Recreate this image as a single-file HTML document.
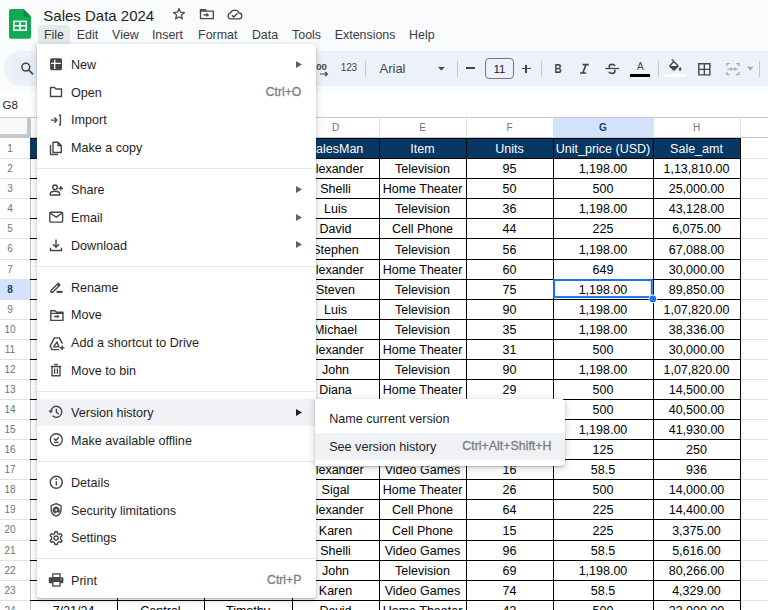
<!DOCTYPE html>
<html><head><meta charset="utf-8"><title>Sales Data 2024</title>
<style>
*{margin:0;padding:0;box-sizing:border-box}
html,body{width:768px;height:610px;overflow:hidden;background:#f9fbfd;font-family:"Liberation Sans", sans-serif}
.t{position:absolute;white-space:nowrap}
.a{position:absolute}
svg{position:absolute;overflow:visible}
</style></head>
<body>
<div class="a" style="left:0;top:92px;width:768px;height:518px;background:#fff"></div><div class="a" style="left:0;top:117px;width:768px;height:1px;background:#c7c7c7"></div><div class="a" style="left:30px;top:137px;width:738px;height:1px;background:#c7c7c7"></div><div class="a" style="left:553px;top:118px;width:100px;height:19px;background:#d3e3fd"></div><div class="a" style="left:30px;top:118px;width:1px;height:492px;background:#c7c7c7"></div><div class="a" style="left:0;top:118px;width:30px;height:20px;background:#f8f9fa;border-right:3px solid #c7c7c7;border-bottom:4px solid #c7c7c7"></div><div class="a" style="left:117px;top:118px;width:1px;height:20px;background:#e1e1e1"></div><div class="t" style="left:-126.5px;width:400px;text-align:center;top:120.53px;font-size:10px;line-height:14px;color:#6f7377;font-weight:normal;">A</div>
<div class="a" style="left:204px;top:118px;width:1px;height:20px;background:#e1e1e1"></div><div class="t" style="left:-39.5px;width:400px;text-align:center;top:120.53px;font-size:10px;line-height:14px;color:#6f7377;font-weight:normal;">B</div>
<div class="a" style="left:292px;top:118px;width:1px;height:20px;background:#e1e1e1"></div><div class="t" style="left:48.0px;width:400px;text-align:center;top:120.53px;font-size:10px;line-height:14px;color:#6f7377;font-weight:normal;">C</div>
<div class="a" style="left:379px;top:118px;width:1px;height:20px;background:#e1e1e1"></div><div class="t" style="left:135.5px;width:400px;text-align:center;top:120.53px;font-size:10px;line-height:14px;color:#6f7377;font-weight:normal;">D</div>
<div class="a" style="left:466px;top:118px;width:1px;height:20px;background:#e1e1e1"></div><div class="t" style="left:222.5px;width:400px;text-align:center;top:120.53px;font-size:10px;line-height:14px;color:#6f7377;font-weight:normal;">E</div>
<div class="a" style="left:553px;top:118px;width:1px;height:20px;background:#e1e1e1"></div><div class="t" style="left:309.5px;width:400px;text-align:center;top:120.53px;font-size:10px;line-height:14px;color:#6f7377;font-weight:normal;">F</div>
<div class="a" style="left:653px;top:118px;width:1px;height:20px;background:#e1e1e1"></div><div class="t" style="left:403.0px;width:400px;text-align:center;top:120.53px;font-size:10px;line-height:14px;color:#1c3a6b;font-weight:bold;">G</div>
<div class="a" style="left:740px;top:118px;width:1px;height:20px;background:#e1e1e1"></div><div class="t" style="left:496.5px;width:400px;text-align:center;top:120.53px;font-size:10px;line-height:14px;color:#6f7377;font-weight:normal;">H</div>
<div class="a" style="left:840px;top:118px;width:1px;height:20px;background:#e1e1e1"></div><div class="t" style="left:590.0px;width:400px;text-align:center;top:120.53px;font-size:10px;line-height:14px;color:#6f7377;font-weight:normal;">I</div>
<div class="a" style="left:0;top:158px;width:768px;height:1px;background:#e1e1e1"></div><div class="a" style="left:0;top:178px;width:768px;height:1px;background:#e1e1e1"></div><div class="a" style="left:0;top:198px;width:768px;height:1px;background:#e1e1e1"></div><div class="a" style="left:0;top:218px;width:768px;height:1px;background:#e1e1e1"></div><div class="a" style="left:0;top:238px;width:768px;height:1px;background:#e1e1e1"></div><div class="a" style="left:0;top:259px;width:768px;height:1px;background:#e1e1e1"></div><div class="a" style="left:0;top:279px;width:768px;height:1px;background:#e1e1e1"></div><div class="a" style="left:0;top:299px;width:768px;height:1px;background:#e1e1e1"></div><div class="a" style="left:0;top:319px;width:768px;height:1px;background:#e1e1e1"></div><div class="a" style="left:0;top:339px;width:768px;height:1px;background:#e1e1e1"></div><div class="a" style="left:0;top:359px;width:768px;height:1px;background:#e1e1e1"></div><div class="a" style="left:0;top:379px;width:768px;height:1px;background:#e1e1e1"></div><div class="a" style="left:0;top:399px;width:768px;height:1px;background:#e1e1e1"></div><div class="a" style="left:0;top:419px;width:768px;height:1px;background:#e1e1e1"></div><div class="a" style="left:0;top:439px;width:768px;height:1px;background:#e1e1e1"></div><div class="a" style="left:0;top:459px;width:768px;height:1px;background:#e1e1e1"></div><div class="a" style="left:0;top:479px;width:768px;height:1px;background:#e1e1e1"></div><div class="a" style="left:0;top:499px;width:768px;height:1px;background:#e1e1e1"></div><div class="a" style="left:0;top:519px;width:768px;height:1px;background:#e1e1e1"></div><div class="a" style="left:0;top:540px;width:768px;height:1px;background:#e1e1e1"></div><div class="a" style="left:0;top:560px;width:768px;height:1px;background:#e1e1e1"></div><div class="a" style="left:0;top:580px;width:768px;height:1px;background:#e1e1e1"></div><div class="a" style="left:0;top:600px;width:768px;height:1px;background:#e1e1e1"></div><div class="a" style="left:0;top:620px;width:768px;height:1px;background:#e1e1e1"></div><div class="a" style="left:0;top:640px;width:768px;height:1px;background:#e1e1e1"></div><div class="a" style="left:117px;top:138px;width:1px;height:472px;background:#e1e1e1"></div><div class="a" style="left:204px;top:138px;width:1px;height:472px;background:#e1e1e1"></div><div class="a" style="left:292px;top:138px;width:1px;height:472px;background:#e1e1e1"></div><div class="a" style="left:379px;top:138px;width:1px;height:472px;background:#e1e1e1"></div><div class="a" style="left:466px;top:138px;width:1px;height:472px;background:#e1e1e1"></div><div class="a" style="left:553px;top:138px;width:1px;height:472px;background:#e1e1e1"></div><div class="a" style="left:653px;top:138px;width:1px;height:472px;background:#e1e1e1"></div><div class="a" style="left:740px;top:138px;width:1px;height:472px;background:#e1e1e1"></div><div class="a" style="left:840px;top:138px;width:1px;height:472px;background:#e1e1e1"></div><div class="a" style="left:0;top:280px;width:30px;height:19px;background:#d3e3fd"></div><div class="t" style="left:-190px;width:400px;text-align:center;top:141.73px;font-size:10px;line-height:14px;color:#6f7377;font-weight:normal;">1</div>
<div class="t" style="left:-190px;width:400px;text-align:center;top:161.73px;font-size:10px;line-height:14px;color:#6f7377;font-weight:normal;">2</div>
<div class="t" style="left:-190px;width:400px;text-align:center;top:181.73px;font-size:10px;line-height:14px;color:#6f7377;font-weight:normal;">3</div>
<div class="t" style="left:-190px;width:400px;text-align:center;top:201.73px;font-size:10px;line-height:14px;color:#6f7377;font-weight:normal;">4</div>
<div class="t" style="left:-190px;width:400px;text-align:center;top:221.73px;font-size:10px;line-height:14px;color:#6f7377;font-weight:normal;">5</div>
<div class="t" style="left:-190px;width:400px;text-align:center;top:241.73px;font-size:10px;line-height:14px;color:#6f7377;font-weight:normal;">6</div>
<div class="t" style="left:-190px;width:400px;text-align:center;top:262.74px;font-size:10px;line-height:14px;color:#6f7377;font-weight:normal;">7</div>
<div class="t" style="left:-190px;width:400px;text-align:center;top:282.74px;font-size:10px;line-height:14px;color:#1c3a6b;font-weight:bold;">8</div>
<div class="t" style="left:-190px;width:400px;text-align:center;top:302.74px;font-size:10px;line-height:14px;color:#6f7377;font-weight:normal;">9</div>
<div class="t" style="left:-190px;width:400px;text-align:center;top:322.74px;font-size:10px;line-height:14px;color:#6f7377;font-weight:normal;">10</div>
<div class="t" style="left:-190px;width:400px;text-align:center;top:342.74px;font-size:10px;line-height:14px;color:#6f7377;font-weight:normal;">11</div>
<div class="t" style="left:-190px;width:400px;text-align:center;top:362.74px;font-size:10px;line-height:14px;color:#6f7377;font-weight:normal;">12</div>
<div class="t" style="left:-190px;width:400px;text-align:center;top:382.74px;font-size:10px;line-height:14px;color:#6f7377;font-weight:normal;">13</div>
<div class="t" style="left:-190px;width:400px;text-align:center;top:402.74px;font-size:10px;line-height:14px;color:#6f7377;font-weight:normal;">14</div>
<div class="t" style="left:-190px;width:400px;text-align:center;top:422.74px;font-size:10px;line-height:14px;color:#6f7377;font-weight:normal;">15</div>
<div class="t" style="left:-190px;width:400px;text-align:center;top:442.74px;font-size:10px;line-height:14px;color:#6f7377;font-weight:normal;">16</div>
<div class="t" style="left:-190px;width:400px;text-align:center;top:462.74px;font-size:10px;line-height:14px;color:#6f7377;font-weight:normal;">17</div>
<div class="t" style="left:-190px;width:400px;text-align:center;top:482.74px;font-size:10px;line-height:14px;color:#6f7377;font-weight:normal;">18</div>
<div class="t" style="left:-190px;width:400px;text-align:center;top:502.74px;font-size:10px;line-height:14px;color:#6f7377;font-weight:normal;">19</div>
<div class="t" style="left:-190px;width:400px;text-align:center;top:522.74px;font-size:10px;line-height:14px;color:#6f7377;font-weight:normal;">20</div>
<div class="t" style="left:-190px;width:400px;text-align:center;top:543.74px;font-size:10px;line-height:14px;color:#6f7377;font-weight:normal;">21</div>
<div class="t" style="left:-190px;width:400px;text-align:center;top:563.74px;font-size:10px;line-height:14px;color:#6f7377;font-weight:normal;">22</div>
<div class="t" style="left:-190px;width:400px;text-align:center;top:583.74px;font-size:10px;line-height:14px;color:#6f7377;font-weight:normal;">23</div>
<div class="t" style="left:-190px;width:400px;text-align:center;top:603.74px;font-size:10px;line-height:14px;color:#6f7377;font-weight:normal;">24</div>
<div class="a" style="left:30px;top:138px;width:711px;height:20px;background:#073763"></div><div class="a" style="left:30px;top:138px;width:711px;height:1px;background:#000"></div><div class="a" style="left:30px;top:158px;width:711px;height:1px;background:#000"></div><div class="a" style="left:30px;top:178px;width:711px;height:1px;background:#000"></div><div class="a" style="left:30px;top:198px;width:711px;height:1px;background:#000"></div><div class="a" style="left:30px;top:218px;width:711px;height:1px;background:#000"></div><div class="a" style="left:30px;top:238px;width:711px;height:1px;background:#000"></div><div class="a" style="left:30px;top:259px;width:711px;height:1px;background:#000"></div><div class="a" style="left:30px;top:279px;width:711px;height:1px;background:#000"></div><div class="a" style="left:30px;top:299px;width:711px;height:1px;background:#000"></div><div class="a" style="left:30px;top:319px;width:711px;height:1px;background:#000"></div><div class="a" style="left:30px;top:339px;width:711px;height:1px;background:#000"></div><div class="a" style="left:30px;top:359px;width:711px;height:1px;background:#000"></div><div class="a" style="left:30px;top:379px;width:711px;height:1px;background:#000"></div><div class="a" style="left:30px;top:399px;width:711px;height:1px;background:#000"></div><div class="a" style="left:30px;top:419px;width:711px;height:1px;background:#000"></div><div class="a" style="left:30px;top:439px;width:711px;height:1px;background:#000"></div><div class="a" style="left:30px;top:459px;width:711px;height:1px;background:#000"></div><div class="a" style="left:30px;top:479px;width:711px;height:1px;background:#000"></div><div class="a" style="left:30px;top:499px;width:711px;height:1px;background:#000"></div><div class="a" style="left:30px;top:519px;width:711px;height:1px;background:#000"></div><div class="a" style="left:30px;top:540px;width:711px;height:1px;background:#000"></div><div class="a" style="left:30px;top:560px;width:711px;height:1px;background:#000"></div><div class="a" style="left:30px;top:580px;width:711px;height:1px;background:#000"></div><div class="a" style="left:30px;top:600px;width:711px;height:1px;background:#000"></div><div class="a" style="left:30px;top:620px;width:711px;height:1px;background:#000"></div><div class="a" style="left:117px;top:138px;width:1px;height:472px;background:#000"></div><div class="a" style="left:204px;top:138px;width:1px;height:472px;background:#000"></div><div class="a" style="left:292px;top:138px;width:1px;height:472px;background:#000"></div><div class="a" style="left:379px;top:138px;width:1px;height:472px;background:#000"></div><div class="a" style="left:466px;top:138px;width:1px;height:472px;background:#000"></div><div class="a" style="left:553px;top:138px;width:1px;height:472px;background:#000"></div><div class="a" style="left:653px;top:138px;width:1px;height:472px;background:#000"></div><div class="a" style="left:740px;top:138px;width:1px;height:472px;background:#000"></div><div class="t" style="left:292px;width:87px;text-align:center;overflow:hidden;top:140.37px;font-size:12.5px;line-height:18px;color:#fff">SalesMan</div><div class="t" style="left:379px;width:87px;text-align:center;overflow:hidden;top:140.37px;font-size:12.5px;line-height:18px;color:#fff">Item</div><div class="t" style="left:466px;width:87px;text-align:center;overflow:hidden;top:140.37px;font-size:12.5px;line-height:18px;color:#fff">Units</div><div class="t" style="left:553px;width:100px;text-align:center;overflow:hidden;top:140.37px;font-size:12.5px;line-height:18px;color:#fff">Unit_price (USD)</div><div class="t" style="left:653px;width:87px;text-align:center;overflow:hidden;top:140.37px;font-size:12.5px;line-height:18px;color:#fff">Sale_amt</div><div class="t" style="left:292px;width:87px;text-align:center;overflow:hidden;top:160.37px;font-size:12.5px;line-height:18px;color:#000">Alexander</div><div class="t" style="left:379px;width:87px;text-align:center;overflow:hidden;top:160.37px;font-size:12.5px;line-height:18px;color:#000">Television</div><div class="t" style="left:466px;width:87px;text-align:center;overflow:hidden;top:160.37px;font-size:12.5px;line-height:18px;color:#000">95</div><div class="t" style="left:553px;width:100px;text-align:center;overflow:hidden;top:160.37px;font-size:12.5px;line-height:18px;color:#000">1,198.00</div><div class="t" style="left:653px;width:87px;text-align:center;overflow:hidden;top:160.37px;font-size:12.5px;line-height:18px;color:#000">1,13,810.00</div><div class="t" style="left:292px;width:87px;text-align:center;overflow:hidden;top:180.37px;font-size:12.5px;line-height:18px;color:#000">Shelli</div><div class="t" style="left:379px;width:87px;text-align:center;overflow:hidden;top:180.37px;font-size:12.5px;line-height:18px;color:#000">Home Theater</div><div class="t" style="left:466px;width:87px;text-align:center;overflow:hidden;top:180.37px;font-size:12.5px;line-height:18px;color:#000">50</div><div class="t" style="left:553px;width:100px;text-align:center;overflow:hidden;top:180.37px;font-size:12.5px;line-height:18px;color:#000">500</div><div class="t" style="left:653px;width:87px;text-align:center;overflow:hidden;top:180.37px;font-size:12.5px;line-height:18px;color:#000">25,000.00</div><div class="t" style="left:292px;width:87px;text-align:center;overflow:hidden;top:200.37px;font-size:12.5px;line-height:18px;color:#000">Luis</div><div class="t" style="left:379px;width:87px;text-align:center;overflow:hidden;top:200.37px;font-size:12.5px;line-height:18px;color:#000">Television</div><div class="t" style="left:466px;width:87px;text-align:center;overflow:hidden;top:200.37px;font-size:12.5px;line-height:18px;color:#000">36</div><div class="t" style="left:553px;width:100px;text-align:center;overflow:hidden;top:200.37px;font-size:12.5px;line-height:18px;color:#000">1,198.00</div><div class="t" style="left:653px;width:87px;text-align:center;overflow:hidden;top:200.37px;font-size:12.5px;line-height:18px;color:#000">43,128.00</div><div class="t" style="left:292px;width:87px;text-align:center;overflow:hidden;top:220.37px;font-size:12.5px;line-height:18px;color:#000">David</div><div class="t" style="left:379px;width:87px;text-align:center;overflow:hidden;top:220.37px;font-size:12.5px;line-height:18px;color:#000">Cell Phone</div><div class="t" style="left:466px;width:87px;text-align:center;overflow:hidden;top:220.37px;font-size:12.5px;line-height:18px;color:#000">44</div><div class="t" style="left:553px;width:100px;text-align:center;overflow:hidden;top:220.37px;font-size:12.5px;line-height:18px;color:#000">225</div><div class="t" style="left:653px;width:87px;text-align:center;overflow:hidden;top:220.37px;font-size:12.5px;line-height:18px;color:#000">6,075.00</div><div class="t" style="left:292px;width:87px;text-align:center;overflow:hidden;top:241.37px;font-size:12.5px;line-height:18px;color:#000">Stephen</div><div class="t" style="left:379px;width:87px;text-align:center;overflow:hidden;top:241.37px;font-size:12.5px;line-height:18px;color:#000">Television</div><div class="t" style="left:466px;width:87px;text-align:center;overflow:hidden;top:241.37px;font-size:12.5px;line-height:18px;color:#000">56</div><div class="t" style="left:553px;width:100px;text-align:center;overflow:hidden;top:241.37px;font-size:12.5px;line-height:18px;color:#000">1,198.00</div><div class="t" style="left:653px;width:87px;text-align:center;overflow:hidden;top:241.37px;font-size:12.5px;line-height:18px;color:#000">67,088.00</div><div class="t" style="left:292px;width:87px;text-align:center;overflow:hidden;top:261.37px;font-size:12.5px;line-height:18px;color:#000">Alexander</div><div class="t" style="left:379px;width:87px;text-align:center;overflow:hidden;top:261.37px;font-size:12.5px;line-height:18px;color:#000">Home Theater</div><div class="t" style="left:466px;width:87px;text-align:center;overflow:hidden;top:261.37px;font-size:12.5px;line-height:18px;color:#000">60</div><div class="t" style="left:553px;width:100px;text-align:center;overflow:hidden;top:261.37px;font-size:12.5px;line-height:18px;color:#000">649</div><div class="t" style="left:653px;width:87px;text-align:center;overflow:hidden;top:261.37px;font-size:12.5px;line-height:18px;color:#000">30,000.00</div><div class="t" style="left:292px;width:87px;text-align:center;overflow:hidden;top:281.37px;font-size:12.5px;line-height:18px;color:#000">Steven</div><div class="t" style="left:379px;width:87px;text-align:center;overflow:hidden;top:281.37px;font-size:12.5px;line-height:18px;color:#000">Television</div><div class="t" style="left:466px;width:87px;text-align:center;overflow:hidden;top:281.37px;font-size:12.5px;line-height:18px;color:#000">75</div><div class="t" style="left:553px;width:100px;text-align:center;overflow:hidden;top:281.37px;font-size:12.5px;line-height:18px;color:#000">1,198.00</div><div class="t" style="left:653px;width:87px;text-align:center;overflow:hidden;top:281.37px;font-size:12.5px;line-height:18px;color:#000">89,850.00</div><div class="t" style="left:292px;width:87px;text-align:center;overflow:hidden;top:301.37px;font-size:12.5px;line-height:18px;color:#000">Luis</div><div class="t" style="left:379px;width:87px;text-align:center;overflow:hidden;top:301.37px;font-size:12.5px;line-height:18px;color:#000">Television</div><div class="t" style="left:466px;width:87px;text-align:center;overflow:hidden;top:301.37px;font-size:12.5px;line-height:18px;color:#000">90</div><div class="t" style="left:553px;width:100px;text-align:center;overflow:hidden;top:301.37px;font-size:12.5px;line-height:18px;color:#000">1,198.00</div><div class="t" style="left:653px;width:87px;text-align:center;overflow:hidden;top:301.37px;font-size:12.5px;line-height:18px;color:#000">1,07,820.00</div><div class="t" style="left:292px;width:87px;text-align:center;overflow:hidden;top:321.37px;font-size:12.5px;line-height:18px;color:#000">Michael</div><div class="t" style="left:379px;width:87px;text-align:center;overflow:hidden;top:321.37px;font-size:12.5px;line-height:18px;color:#000">Television</div><div class="t" style="left:466px;width:87px;text-align:center;overflow:hidden;top:321.37px;font-size:12.5px;line-height:18px;color:#000">35</div><div class="t" style="left:553px;width:100px;text-align:center;overflow:hidden;top:321.37px;font-size:12.5px;line-height:18px;color:#000">1,198.00</div><div class="t" style="left:653px;width:87px;text-align:center;overflow:hidden;top:321.37px;font-size:12.5px;line-height:18px;color:#000">38,336.00</div><div class="t" style="left:292px;width:87px;text-align:center;overflow:hidden;top:341.37px;font-size:12.5px;line-height:18px;color:#000">Alexander</div><div class="t" style="left:379px;width:87px;text-align:center;overflow:hidden;top:341.37px;font-size:12.5px;line-height:18px;color:#000">Home Theater</div><div class="t" style="left:466px;width:87px;text-align:center;overflow:hidden;top:341.37px;font-size:12.5px;line-height:18px;color:#000">31</div><div class="t" style="left:553px;width:100px;text-align:center;overflow:hidden;top:341.37px;font-size:12.5px;line-height:18px;color:#000">500</div><div class="t" style="left:653px;width:87px;text-align:center;overflow:hidden;top:341.37px;font-size:12.5px;line-height:18px;color:#000">30,000.00</div><div class="t" style="left:292px;width:87px;text-align:center;overflow:hidden;top:361.37px;font-size:12.5px;line-height:18px;color:#000">John</div><div class="t" style="left:379px;width:87px;text-align:center;overflow:hidden;top:361.37px;font-size:12.5px;line-height:18px;color:#000">Television</div><div class="t" style="left:466px;width:87px;text-align:center;overflow:hidden;top:361.37px;font-size:12.5px;line-height:18px;color:#000">90</div><div class="t" style="left:553px;width:100px;text-align:center;overflow:hidden;top:361.37px;font-size:12.5px;line-height:18px;color:#000">1,198.00</div><div class="t" style="left:653px;width:87px;text-align:center;overflow:hidden;top:361.37px;font-size:12.5px;line-height:18px;color:#000">1,07,820.00</div><div class="t" style="left:292px;width:87px;text-align:center;overflow:hidden;top:381.37px;font-size:12.5px;line-height:18px;color:#000">Diana</div><div class="t" style="left:379px;width:87px;text-align:center;overflow:hidden;top:381.37px;font-size:12.5px;line-height:18px;color:#000">Home Theater</div><div class="t" style="left:466px;width:87px;text-align:center;overflow:hidden;top:381.37px;font-size:12.5px;line-height:18px;color:#000">29</div><div class="t" style="left:553px;width:100px;text-align:center;overflow:hidden;top:381.37px;font-size:12.5px;line-height:18px;color:#000">500</div><div class="t" style="left:653px;width:87px;text-align:center;overflow:hidden;top:381.37px;font-size:12.5px;line-height:18px;color:#000">14,500.00</div><div class="t" style="left:292px;width:87px;text-align:center;overflow:hidden;top:401.37px;font-size:12.5px;line-height:18px;color:#000">James</div><div class="t" style="left:379px;width:87px;text-align:center;overflow:hidden;top:401.37px;font-size:12.5px;line-height:18px;color:#000">Television</div><div class="t" style="left:466px;width:87px;text-align:center;overflow:hidden;top:401.37px;font-size:12.5px;line-height:18px;color:#000">45</div><div class="t" style="left:553px;width:100px;text-align:center;overflow:hidden;top:401.37px;font-size:12.5px;line-height:18px;color:#000">500</div><div class="t" style="left:653px;width:87px;text-align:center;overflow:hidden;top:401.37px;font-size:12.5px;line-height:18px;color:#000">40,500.00</div><div class="t" style="left:292px;width:87px;text-align:center;overflow:hidden;top:421.37px;font-size:12.5px;line-height:18px;color:#000">Bill</div><div class="t" style="left:379px;width:87px;text-align:center;overflow:hidden;top:421.37px;font-size:12.5px;line-height:18px;color:#000">Television</div><div class="t" style="left:466px;width:87px;text-align:center;overflow:hidden;top:421.37px;font-size:12.5px;line-height:18px;color:#000">35</div><div class="t" style="left:553px;width:100px;text-align:center;overflow:hidden;top:421.37px;font-size:12.5px;line-height:18px;color:#000">1,198.00</div><div class="t" style="left:653px;width:87px;text-align:center;overflow:hidden;top:421.37px;font-size:12.5px;line-height:18px;color:#000">41,930.00</div><div class="t" style="left:292px;width:87px;text-align:center;overflow:hidden;top:441.37px;font-size:12.5px;line-height:18px;color:#000">Mary</div><div class="t" style="left:379px;width:87px;text-align:center;overflow:hidden;top:441.37px;font-size:12.5px;line-height:18px;color:#000">Video Games</div><div class="t" style="left:466px;width:87px;text-align:center;overflow:hidden;top:441.37px;font-size:12.5px;line-height:18px;color:#000">2</div><div class="t" style="left:553px;width:100px;text-align:center;overflow:hidden;top:441.37px;font-size:12.5px;line-height:18px;color:#000">125</div><div class="t" style="left:653px;width:87px;text-align:center;overflow:hidden;top:441.37px;font-size:12.5px;line-height:18px;color:#000">250</div><div class="t" style="left:292px;width:87px;text-align:center;overflow:hidden;top:461.37px;font-size:12.5px;line-height:18px;color:#000">Alexander</div><div class="t" style="left:379px;width:87px;text-align:center;overflow:hidden;top:461.37px;font-size:12.5px;line-height:18px;color:#000">Video Games</div><div class="t" style="left:466px;width:87px;text-align:center;overflow:hidden;top:461.37px;font-size:12.5px;line-height:18px;color:#000">16</div><div class="t" style="left:553px;width:100px;text-align:center;overflow:hidden;top:461.37px;font-size:12.5px;line-height:18px;color:#000">58.5</div><div class="t" style="left:653px;width:87px;text-align:center;overflow:hidden;top:461.37px;font-size:12.5px;line-height:18px;color:#000">936</div><div class="t" style="left:292px;width:87px;text-align:center;overflow:hidden;top:481.37px;font-size:12.5px;line-height:18px;color:#000">Sigal</div><div class="t" style="left:379px;width:87px;text-align:center;overflow:hidden;top:481.37px;font-size:12.5px;line-height:18px;color:#000">Home Theater</div><div class="t" style="left:466px;width:87px;text-align:center;overflow:hidden;top:481.37px;font-size:12.5px;line-height:18px;color:#000">26</div><div class="t" style="left:553px;width:100px;text-align:center;overflow:hidden;top:481.37px;font-size:12.5px;line-height:18px;color:#000">500</div><div class="t" style="left:653px;width:87px;text-align:center;overflow:hidden;top:481.37px;font-size:12.5px;line-height:18px;color:#000">14,000.00</div><div class="t" style="left:292px;width:87px;text-align:center;overflow:hidden;top:501.37px;font-size:12.5px;line-height:18px;color:#000">Alexander</div><div class="t" style="left:379px;width:87px;text-align:center;overflow:hidden;top:501.37px;font-size:12.5px;line-height:18px;color:#000">Cell Phone</div><div class="t" style="left:466px;width:87px;text-align:center;overflow:hidden;top:501.37px;font-size:12.5px;line-height:18px;color:#000">64</div><div class="t" style="left:553px;width:100px;text-align:center;overflow:hidden;top:501.37px;font-size:12.5px;line-height:18px;color:#000">225</div><div class="t" style="left:653px;width:87px;text-align:center;overflow:hidden;top:501.37px;font-size:12.5px;line-height:18px;color:#000">14,400.00</div><div class="t" style="left:292px;width:87px;text-align:center;overflow:hidden;top:522.37px;font-size:12.5px;line-height:18px;color:#000">Karen</div><div class="t" style="left:379px;width:87px;text-align:center;overflow:hidden;top:522.37px;font-size:12.5px;line-height:18px;color:#000">Cell Phone</div><div class="t" style="left:466px;width:87px;text-align:center;overflow:hidden;top:522.37px;font-size:12.5px;line-height:18px;color:#000">15</div><div class="t" style="left:553px;width:100px;text-align:center;overflow:hidden;top:522.37px;font-size:12.5px;line-height:18px;color:#000">225</div><div class="t" style="left:653px;width:87px;text-align:center;overflow:hidden;top:522.37px;font-size:12.5px;line-height:18px;color:#000">3,375.00</div><div class="t" style="left:292px;width:87px;text-align:center;overflow:hidden;top:542.37px;font-size:12.5px;line-height:18px;color:#000">Shelli</div><div class="t" style="left:379px;width:87px;text-align:center;overflow:hidden;top:542.37px;font-size:12.5px;line-height:18px;color:#000">Video Games</div><div class="t" style="left:466px;width:87px;text-align:center;overflow:hidden;top:542.37px;font-size:12.5px;line-height:18px;color:#000">96</div><div class="t" style="left:553px;width:100px;text-align:center;overflow:hidden;top:542.37px;font-size:12.5px;line-height:18px;color:#000">58.5</div><div class="t" style="left:653px;width:87px;text-align:center;overflow:hidden;top:542.37px;font-size:12.5px;line-height:18px;color:#000">5,616.00</div><div class="t" style="left:292px;width:87px;text-align:center;overflow:hidden;top:562.37px;font-size:12.5px;line-height:18px;color:#000">John</div><div class="t" style="left:379px;width:87px;text-align:center;overflow:hidden;top:562.37px;font-size:12.5px;line-height:18px;color:#000">Television</div><div class="t" style="left:466px;width:87px;text-align:center;overflow:hidden;top:562.37px;font-size:12.5px;line-height:18px;color:#000">69</div><div class="t" style="left:553px;width:100px;text-align:center;overflow:hidden;top:562.37px;font-size:12.5px;line-height:18px;color:#000">1,198.00</div><div class="t" style="left:653px;width:87px;text-align:center;overflow:hidden;top:562.37px;font-size:12.5px;line-height:18px;color:#000">80,266.00</div><div class="t" style="left:292px;width:87px;text-align:center;overflow:hidden;top:582.37px;font-size:12.5px;line-height:18px;color:#000">Karen</div><div class="t" style="left:379px;width:87px;text-align:center;overflow:hidden;top:582.37px;font-size:12.5px;line-height:18px;color:#000">Video Games</div><div class="t" style="left:466px;width:87px;text-align:center;overflow:hidden;top:582.37px;font-size:12.5px;line-height:18px;color:#000">74</div><div class="t" style="left:553px;width:100px;text-align:center;overflow:hidden;top:582.37px;font-size:12.5px;line-height:18px;color:#000">58.5</div><div class="t" style="left:653px;width:87px;text-align:center;overflow:hidden;top:582.37px;font-size:12.5px;line-height:18px;color:#000">4,329.00</div><div class="t" style="left:30px;width:87px;text-align:center;overflow:hidden;top:602.37px;font-size:12.5px;line-height:18px;color:#000">7/21/24</div><div class="t" style="left:117px;width:87px;text-align:center;overflow:hidden;top:602.37px;font-size:12.5px;line-height:18px;color:#000">Central</div><div class="t" style="left:204px;width:88px;text-align:center;overflow:hidden;top:602.37px;font-size:12.5px;line-height:18px;color:#000">Timothy</div><div class="t" style="left:292px;width:87px;text-align:center;overflow:hidden;top:602.37px;font-size:12.5px;line-height:18px;color:#000">David</div><div class="t" style="left:379px;width:87px;text-align:center;overflow:hidden;top:602.37px;font-size:12.5px;line-height:18px;color:#000">Home Theater</div><div class="t" style="left:466px;width:87px;text-align:center;overflow:hidden;top:602.37px;font-size:12.5px;line-height:18px;color:#000">43</div><div class="t" style="left:553px;width:100px;text-align:center;overflow:hidden;top:602.37px;font-size:12.5px;line-height:18px;color:#000">500</div><div class="t" style="left:653px;width:87px;text-align:center;overflow:hidden;top:602.37px;font-size:12.5px;line-height:18px;color:#000">23,000.00</div><svg style="left:0;top:0" width="768" height="610" viewBox="0 0 768 610"><rect x="554.1" y="280" width="97.7" height="17.1" fill="none" stroke="#1a73e8" stroke-width="2"/><circle cx="652.8" cy="298.9" r="4.3" fill="#fff"/><circle cx="652.8" cy="298.9" r="3.4" fill="#1a73e8"/></svg><div class="t" style="left:2.6px;top:96.82px;font-size:11.5px;line-height:16px;color:#1f1f1f;font-weight:normal;">G8</div>
<div class="a" style="left:4px;top:51px;width:800px;height:35px;border-radius:18px;background:#edf2fa"></div><div class="a" style="left:12px;top:56.5px;width:40px;height:23px;background:#e9eef6"></div><svg style="left:19px;top:61px" width="16" height="16" viewBox="0 0 16 16"><circle cx="6.8" cy="6.1" r="3.9" fill="none" stroke="#444746" stroke-width="1.5"/><path d="M9.6 8.9 L13.6 12.9" stroke="#444746" stroke-width="1.7" stroke-linecap="round"/></svg><div class="t" style="left:316.3px;top:59.77px;font-size:9.6px;line-height:13px;color:#444746;font-weight:normal;letter-spacing:-0.2px;font-weight:bold">00</div>
<svg style="left:319px;top:70.5px" width="10" height="6" viewBox="0 0 10 6"><path d="M1 3 H8 M6 1 L8.5 3 L6 5" fill="none" stroke="#444746" stroke-width="1.2"/></svg><div class="t" style="left:340.8px;top:61.33px;font-size:10px;line-height:14px;color:#444746;font-weight:normal;letter-spacing:-0.2px">123</div>
<div class="a" style="left:365px;top:60.8px;width:1px;height:16.2px;background:#c7c7c7"></div><div class="a" style="left:457px;top:60.8px;width:1px;height:16.2px;background:#c7c7c7"></div><div class="a" style="left:541px;top:60.8px;width:1px;height:16.2px;background:#c7c7c7"></div><div class="a" style="left:658px;top:60.8px;width:1px;height:16.2px;background:#c7c7c7"></div><div class="a" style="left:759px;top:60.8px;width:1px;height:16.2px;background:#c7c7c7"></div><div class="t" style="left:379.5px;top:59.50px;font-size:13px;line-height:18px;color:#444746;font-weight:normal;">Arial</div>
<svg style="left:437.9px;top:66.8px" width="7" height="4" viewBox="0 0 7 4"><path d="M0 0 H6.8 L3.4 3.5 Z" fill="#444746"/></svg><div class="a" style="left:466px;top:67px;width:9px;height:1.6px;background:#444746"></div><div class="a" style="left:485px;top:58px;width:29px;height:21px;border:1px solid #747775;border-radius:4px"></div><div class="t" style="left:299.5px;width:400px;text-align:center;top:60.52px;font-size:11.5px;line-height:16px;color:#1f1f1f;font-weight:normal;">11</div>
<div class="a" style="left:521.5px;top:68px;width:9.1px;height:1.4px;background:#444746"></div><div class="a" style="left:525.35px;top:64.5px;width:1.4px;height:8.5px;background:#444746"></div><div class="t" style="left:357.5px;width:400px;text-align:center;top:59.57px;font-size:12.5px;line-height:18px;color:#444746;font-weight:bold;transform:scaleX(0.8)">B</div>
<svg style="left:578px;top:61px" width="12" height="14" viewBox="0 0 12 14"><path d="M4.6 3.6 H10.8 M2 12 H8.2 M8 3.6 L4.8 12" fill="none" stroke="#444746" stroke-width="1.7"/></svg><svg style="left:605px;top:61px" width="14" height="14" viewBox="0 0 14 14"><path d="M10 5 C9.5 3.9 8.4 3.4 7.1 3.4 C5.4 3.4 4.2 4.3 4.2 5.5 C4.2 6 4.4 6.4 4.9 6.7 M9.4 8.8 C9.8 9.2 9.9 9.6 9.9 10 C9.9 11.5 8.7 12.4 7.1 12.4 C5.5 12.4 4.3 11.7 3.9 10.7" fill="none" stroke="#444746" stroke-width="1.6"/><path d="M0.3 7.5 H14.3" stroke="#444746" stroke-width="1.3"/></svg><div class="t" style="left:440.29999999999995px;width:400px;text-align:center;top:59.63px;font-size:10px;line-height:14px;color:#444746;font-weight:normal;">A</div>
<div class="a" style="left:630.2px;top:73.8px;width:20px;height:3.3px;background:#000"></div><svg style="left:666.9px;top:59.4px" width="16.6" height="16.6" viewBox="0 0 24 24"><path d="M16.56 8.94L7.62 0 6.21 1.41l2.38 2.38-5.15 5.15c-.59.59-.59 1.54 0 2.12l5.5 5.5c.29.29.68.44 1.06.44s.77-.15 1.06-.44l5.5-5.5c.59-.58.59-1.53 0-2.12zM5.21 10L10 5.21 14.79 10H5.21zM19 11.5s-2 2.17-2 3.5c0 1.1.9 2 2 2s2-.9 2-2c0-1.33-2-3.5-2-3.5z" fill="#444746"/></svg><div class="a" style="left:665.3px;top:74px;width:20.6px;height:3.3px;background:#fff"></div><svg style="left:695.5px;top:60.5px" width="16.66" height="16.66" viewBox="0 0 24 24"><path d="M3 3v18h18V3H3zm8 16H5v-6h6v6zm0-8H5V5h6v6zm8 8h-6v-6h6v6zm0-8h-6V5h6v6z" fill="#444746"/></svg><svg style="left:0;top:0" width="768" height="610" viewBox="0 0 768 610"><path d="M726.9 66.3 V63.6 H729.8 M736.1 63.6 H739 V66.3 M726.9 72 V74.6 H729.8 M736.1 74.6 H739 V72 M727.3 69.1 H731 M737.6 69.1 H734.8" fill="none" stroke="#a8abae" stroke-width="1.3"/><path d="M730.5 66.9 L733 69.1 L730.5 71.3 Z M735.3 66.9 L732.8 69.1 L735.3 71.3 Z" fill="#a8abae"/><path d="M746.9 66.7 H753.5 L750.2 70.4 Z" fill="#a8abae"/></svg><svg style="left:9px;top:8.6px" width="22" height="30" viewBox="0 0 22 30">
<path d="M2 0 H14.5 L22 7.5 V27.8 A2 2 0 0 1 20 29.8 H2 A2 2 0 0 1 0 27.8 V2 A2 2 0 0 1 2 0 Z" fill="#12a955"/>
<path d="M14.5 0 L22 7.5 H14.5 Z" fill="#0b8a3e"/>
<rect x="4.85" y="12.35" width="12.4" height="8.8" fill="none" stroke="#fff" stroke-width="1.5"/>
<path d="M11.05 12.35 V21.15 M4.85 16.75 H17.25" stroke="#fff" stroke-width="1.5"/>
</svg><div class="t" style="left:43.3px;top:4.60px;font-size:15px;line-height:21px;color:#1f1f1f;font-weight:normal;">Sales Data 2024</div>
<svg style="left:172px;top:7px" width="14" height="14" viewBox="0 0 24 24"><path d="M12 2.5 L14.6 8.9 L21.5 9.4 L16.2 13.8 L17.9 20.6 L12 16.9 L6.1 20.6 L7.8 13.8 L2.5 9.4 L9.4 8.9 Z" fill="none" stroke="#444746" stroke-width="2" stroke-linejoin="round"/></svg><svg style="left:0;top:0" width="768" height="610" viewBox="0 0 768 610"><path d="M200.5 11.2 H213.3 V18.7 H200.5 Z" fill="none" stroke="#444746" stroke-width="1.3" stroke-linejoin="round"/><path d="M199.85 8.9 H205.6 L207.4 10.7 H199.85 Z M199.85 10 H201 V12 H199.85 Z" fill="#444746"/><path d="M203.6 14.9 H207.2" stroke="#444746" stroke-width="1.5"/><path d="M206.5 12.8 L209.2 14.9 L206.5 17 Z" fill="#444746"/><path d="M230.6 18.9 H238.8 A2.95 2.95 0 0 0 238.9 13 A4.6 4.6 0 0 0 230.3 13.2 A2.9 2.9 0 0 0 230.6 18.9 Z" fill="none" stroke="#444746" stroke-width="1.3"/><path d="M231.9 15.2 L233.8 17 L237.3 13.5" fill="none" stroke="#444746" stroke-width="1.4"/></svg><div class="a" style="left:37.5px;top:25px;width:32.5px;height:20px;border-radius:4px 4px 0 0;background:#e6e9ec"></div><div class="t" style="left:43.9px;top:26.50px;font-size:12.4px;line-height:17px;color:#3a3c3f;font-weight:normal;">File</div>
<div class="t" style="left:76.8px;top:26.50px;font-size:12.4px;line-height:17px;color:#3a3c3f;font-weight:normal;">Edit</div>
<div class="t" style="left:112.1px;top:26.50px;font-size:12.4px;line-height:17px;color:#3a3c3f;font-weight:normal;">View</div>
<div class="t" style="left:151.9px;top:26.50px;font-size:12.4px;line-height:17px;color:#3a3c3f;font-weight:normal;">Insert</div>
<div class="t" style="left:198.1px;top:26.50px;font-size:12.4px;line-height:17px;color:#3a3c3f;font-weight:normal;">Format</div>
<div class="t" style="left:251.9px;top:26.50px;font-size:12.4px;line-height:17px;color:#3a3c3f;font-weight:normal;">Data</div>
<div class="t" style="left:292.1px;top:26.50px;font-size:12.4px;line-height:17px;color:#3a3c3f;font-weight:normal;">Tools</div>
<div class="t" style="left:334.8px;top:26.50px;font-size:12.4px;line-height:17px;color:#3a3c3f;font-weight:normal;">Extensions</div>
<div class="t" style="left:409.1px;top:26.50px;font-size:12.4px;line-height:17px;color:#3a3c3f;font-weight:normal;">Help</div>
<div class="a" style="left:37px;top:44px;width:279px;height:554px;background:#fff;border-radius:0 4px 3px 3px;box-shadow:0 2px 6px 2px rgba(60,64,67,.15),0 1px 2px rgba(60,64,67,.3)"></div><div class="a" style="left:37px;top:167.9px;width:279px;height:1px;background:#e4e6e9"></div><div class="a" style="left:37px;top:265.5px;width:279px;height:1px;background:#e4e6e9"></div><div class="a" style="left:37px;top:390.8px;width:279px;height:1px;background:#e4e6e9"></div><div class="a" style="left:37px;top:460.7px;width:279px;height:1px;background:#e4e6e9"></div><div class="a" style="left:37px;top:558.3px;width:279px;height:1px;background:#e4e6e9"></div><div class="a" style="left:37px;top:398.5px;width:279px;height:27.7px;background:#f0f1f4"></div><div class="t" style="left:71px;top:55.83px;font-size:12.6px;line-height:18px;color:#1f1f1f;font-weight:normal;">New</div>
<svg style="left:295.5px;top:60.7px" width="6" height="7" viewBox="0 0 6 7"><path d="M0 0 L6 3.5 L0 7 Z" fill="#5f6368"/></svg><div class="t" style="left:71px;top:83.53px;font-size:12.6px;line-height:18px;color:#1f1f1f;font-weight:normal;">Open</div>
<div class="t" style="right:466.7px;top:83.57px;font-size:12.2px;line-height:17px;color:#7a7e83;font-weight:normal;-webkit-text-stroke:0.3px #7a7e83">Ctrl+O</div>
<div class="t" style="left:71px;top:111.23px;font-size:12.6px;line-height:18px;color:#1f1f1f;font-weight:normal;">Import</div>
<div class="t" style="left:71px;top:138.93px;font-size:12.6px;line-height:18px;color:#1f1f1f;font-weight:normal;">Make a copy</div>
<div class="t" style="left:71px;top:181.13px;font-size:12.6px;line-height:18px;color:#1f1f1f;font-weight:normal;">Share</div>
<svg style="left:295.5px;top:186.0px" width="6" height="7" viewBox="0 0 6 7"><path d="M0 0 L6 3.5 L0 7 Z" fill="#5f6368"/></svg><div class="t" style="left:71px;top:208.83px;font-size:12.6px;line-height:18px;color:#1f1f1f;font-weight:normal;">Email</div>
<svg style="left:295.5px;top:213.7px" width="6" height="7" viewBox="0 0 6 7"><path d="M0 0 L6 3.5 L0 7 Z" fill="#5f6368"/></svg><div class="t" style="left:71px;top:236.53px;font-size:12.6px;line-height:18px;color:#1f1f1f;font-weight:normal;">Download</div>
<svg style="left:295.5px;top:241.4px" width="6" height="7" viewBox="0 0 6 7"><path d="M0 0 L6 3.5 L0 7 Z" fill="#5f6368"/></svg><div class="t" style="left:71px;top:278.73px;font-size:12.6px;line-height:18px;color:#1f1f1f;font-weight:normal;">Rename</div>
<div class="t" style="left:71px;top:306.43px;font-size:12.6px;line-height:18px;color:#1f1f1f;font-weight:normal;">Move</div>
<div class="t" style="left:71px;top:334.13px;font-size:12.6px;line-height:18px;color:#1f1f1f;font-weight:normal;">Add a shortcut to Drive</div>
<div class="t" style="left:71px;top:361.83px;font-size:12.6px;line-height:18px;color:#1f1f1f;font-weight:normal;">Move to bin</div>
<div class="t" style="left:71px;top:404.03px;font-size:12.6px;line-height:18px;color:#1f1f1f;font-weight:normal;">Version history</div>
<svg style="left:295.5px;top:408.9px" width="6" height="7" viewBox="0 0 6 7"><path d="M0 0 L6 3.5 L0 7 Z" fill="#1f1f1f"/></svg><div class="t" style="left:71px;top:431.73px;font-size:12.6px;line-height:18px;color:#1f1f1f;font-weight:normal;">Make available offline</div>
<div class="t" style="left:71px;top:473.93px;font-size:12.6px;line-height:18px;color:#1f1f1f;font-weight:normal;">Details</div>
<div class="t" style="left:71px;top:501.63px;font-size:12.6px;line-height:18px;color:#1f1f1f;font-weight:normal;">Security limitations</div>
<div class="t" style="left:71px;top:529.33px;font-size:12.6px;line-height:18px;color:#1f1f1f;font-weight:normal;">Settings</div>
<div class="t" style="left:71px;top:571.53px;font-size:12.6px;line-height:18px;color:#1f1f1f;font-weight:normal;">Print</div>
<div class="t" style="right:466.7px;top:571.57px;font-size:12.2px;line-height:17px;color:#7a7e83;font-weight:normal;-webkit-text-stroke:0.3px #7a7e83">Ctrl+P</div>
<svg style="left:49px;top:57.2px" width="14" height="14" viewBox="0 0 14 14"><rect x="1.1" y="1.2" width="11.9" height="12" rx="1.6" fill="#444746"/><path d="M2 6.3 H11.9 M5.7 2.7 V11.9" stroke="#fff" stroke-width="1.3"/></svg><svg style="left:49px;top:84.9px" width="14" height="14" viewBox="0 0 14 14"><path d="M1.5 2.5 H5.5 L7 4 H12.5 V11.5 H1.5 Z" fill="none" stroke="#444746" stroke-width="1.4" stroke-linejoin="round"/></svg><svg style="left:49px;top:112.6px" width="14" height="14" viewBox="0 0 14 14"><path d="M1.9 7.1 H8 M5.3 4.4 L8 7.1 L5.3 9.8 M10 2.2 H11.4 V12 H10" fill="none" stroke="#444746" stroke-width="1.4" stroke-linejoin="round"/></svg><svg style="left:49px;top:140.3px" width="14" height="14" viewBox="0 0 14 14"><path d="M4 2.2 H9 L12.3 5.5 V12.5 H4 Z M9 2.2 V5.5 H12.3" fill="none" stroke="#444746" stroke-width="1.4" stroke-linejoin="round"/><path d="M1.5 5 V14.5 H9" fill="none" stroke="#444746" stroke-width="1.4" stroke-linejoin="round"/></svg><svg style="left:49px;top:182.5px" width="14" height="14" viewBox="0 0 14 14"><circle cx="6" cy="4.3" r="2.3" fill="none" stroke="#444746" stroke-width="1.4" stroke-linejoin="round"/><path d="M1.3 12 V10.8 C1.3 9.3 3.5 8.3 6 8.3 C8.5 8.3 10.7 9.3 10.7 10.8 V12 Z" fill="none" stroke="#444746" stroke-width="1.4" stroke-linejoin="round"/><path d="M11.8 3 V7.4 M9.6 5.2 H14" stroke="#444746" stroke-width="1.4"/></svg><svg style="left:49px;top:210.2px" width="14" height="14" viewBox="0 0 14 14"><rect x="0.8" y="2.2" width="12.8" height="9.9" rx="0.9" fill="none" stroke="#444746" stroke-width="1.4" stroke-linejoin="round"/><path d="M1 3 L7.2 7.2 L13.4 3" fill="none" stroke="#444746" stroke-width="1.4" stroke-linejoin="round"/></svg><svg style="left:49px;top:237.9px" width="14" height="14" viewBox="0 0 14 14"><path d="M7 1.5 V9 M4 6.3 L7 9.2 L10 6.3 M1.5 9.8 V12.5 H12.5 V9.8" fill="none" stroke="#444746" stroke-width="1.4" stroke-linejoin="round"/></svg><svg style="left:49px;top:280.1px" width="14" height="14" viewBox="0 0 14 14"><path d="M2 10.5 L9.3 3.2 L11 4.9 L3.7 12.2 H2 Z M8.3 4.2 L10 5.9" fill="none" stroke="#444746" stroke-width="1.4" stroke-linejoin="round"/><path d="M7.6 11.9 H13.6" stroke="#444746" stroke-width="2.1"/></svg><svg style="left:49px;top:307.8px" width="14" height="14" viewBox="0 0 14 14"><path d="M1.8 2.8 H6 L7.5 4.3 H14 V12.4 H1.8 Z" fill="none" stroke="#444746" stroke-width="1.4" stroke-linejoin="round"/><path d="M1.8 5.4 H14" stroke="#444746" stroke-width="1.2"/><path d="M5 8.5 H8.5" stroke="#444746" stroke-width="1.5"/><path d="M8.2 6.4 L10.6 8.5 L8.2 10.6 Z" fill="#444746"/></svg><svg style="left:49px;top:335.5px" width="14" height="14" viewBox="0 0 14 14"><path d="M10.2 13.6 H3.1 L1.1 10.1 L5.4 1.9 H10.3 L13.5 7.6" fill="none" stroke="#444746" stroke-width="1.4" stroke-linejoin="round"/><path d="M8 5.9 L4.7 10.9 H9.9 Z" fill="none" stroke="#444746" stroke-width="1.4" stroke-linejoin="round"/><path d="M13.1 9.4 V14 M10.8 11.7 H15.4" stroke="#444746" stroke-width="1.4"/></svg><svg style="left:49px;top:363.2px" width="14" height="14" viewBox="0 0 14 14"><path d="M3 3.5 H11 V12.8 H3 Z M1.8 3.5 H12.2 M5.3 1.5 H8.7 M5.6 5.5 V10.8 M8.4 5.5 V10.8" fill="none" stroke="#444746" stroke-width="1.4" stroke-linejoin="round"/></svg><svg style="left:49px;top:405.4px" width="14" height="14" viewBox="0 0 14 14"><path d="M1.8 6.8 A5.5 5.5 0 1 1 3.5 10.8" fill="none" stroke="#444746" stroke-width="1.4" stroke-linejoin="round"/><path d="M-0.4 5.6 H4 L1.8 8.6 Z" fill="#444746"/><path d="M7.4 3.8 V7.2 L9.8 9.2" fill="none" stroke="#444746" stroke-width="1.4" stroke-linejoin="round"/></svg><svg style="left:49px;top:433.1px" width="14" height="14" viewBox="0 0 14 14"><circle cx="7.3" cy="6.7" r="6" fill="none" stroke="#444746" stroke-width="1.4" stroke-linejoin="round"/><path d="M5 9.4 H9.6" stroke="#444746" stroke-width="1.4"/><path d="M4.8 5.4 L6.9 7.4 L9.9 4.2" fill="none" stroke="#444746" stroke-width="1.4" stroke-linejoin="round"/></svg><svg style="left:49px;top:475.3px" width="14" height="14" viewBox="0 0 14 14"><circle cx="7.3" cy="7.3" r="6" fill="none" stroke="#444746" stroke-width="1.4" stroke-linejoin="round"/><path d="M7.3 6.3 V10.6" stroke="#444746" stroke-width="1.4"/><circle cx="7.3" cy="4.2" r="0.85" fill="#444746"/></svg><svg style="left:49px;top:503.0px" width="14" height="14" viewBox="0 0 14 14"><path d="M7.1 0.7 L12 2.6 V6.8 C12 9.9 10 12.3 7.1 13.2 C4.2 12.3 2.2 9.9 2.2 6.8 V2.6 Z" fill="none" stroke="#444746" stroke-width="1.4" stroke-linejoin="round"/><circle cx="7.2" cy="7" r="1.7" fill="none" stroke="#444746" stroke-width="1.4" stroke-linejoin="round"/><path d="M9 6.6 V8.4 C9 9.4 10.1 9.3 10.1 8 C10.1 5.9 8.8 4.3 7.1 4.3 C5.5 4.3 4.3 5.6 4.3 7.1 C4.3 8.8 5.6 10 7.4 9.9" fill="none" stroke="#444746" stroke-width="1.4" stroke-linejoin="round"/></svg><svg style="left:49px;top:530.7px" width="14" height="14" viewBox="0 0 14 14"><g transform="translate(7.1 7.1) scale(1.1) translate(-7 -7)"><path d="M6 1.2 H8 L8.4 2.9 L9.8 3.7 L11.4 3.1 L12.4 4.9 L11.1 6 V8 L12.4 9.1 L11.4 10.9 L9.8 10.3 L8.4 11.1 L8 12.8 H6 L5.6 11.1 L4.2 10.3 L2.6 10.9 L1.6 9.1 L2.9 8 V6 L1.6 4.9 L2.6 3.1 L4.2 3.7 L5.6 2.9 Z" fill="none" stroke="#444746" stroke-width="1.25" stroke-linejoin="round"/><circle cx="7" cy="7" r="1.9" fill="none" stroke="#444746" stroke-width="1.25"/></g></svg><svg style="left:49px;top:572.9px" width="14" height="14" viewBox="0 0 14 14"><rect x="3.8" y="0.9" width="7.2" height="3.8" fill="#fff" stroke="#444746" stroke-width="1.3"/><rect x="-0.2" y="4.3" width="14.6" height="5.9" rx="1" fill="#444746"/><rect x="3.8" y="8.4" width="7.2" height="4.6" fill="#fff" stroke="#444746" stroke-width="1.3"/><circle cx="12" cy="6" r="0.6" fill="#fff"/></svg><div class="a" style="left:315.3px;top:399px;width:250px;height:67px;background:#fff;border-radius:0 4px 4px 2px;box-shadow:0 2px 6px 2px rgba(60,64,67,.15),0 1px 2px rgba(60,64,67,.3)"></div><div class="a" style="left:315.3px;top:432.6px;width:250px;height:27.7px;background:#f0f1f4"></div><div class="t" style="left:329.2px;top:409.83px;font-size:12.6px;line-height:18px;color:#1f1f1f;font-weight:normal;">Name current version</div>
<div class="t" style="left:329.2px;top:437.53px;font-size:12.6px;line-height:18px;color:#1f1f1f;font-weight:normal;">See version history</div>
<div class="t" style="right:216.5px;top:437.90px;font-size:12.4px;line-height:17px;color:#7a7e83;font-weight:normal;-webkit-text-stroke:0.3px #7a7e83">Ctrl+Alt+Shift+H</div>

</body></html>
